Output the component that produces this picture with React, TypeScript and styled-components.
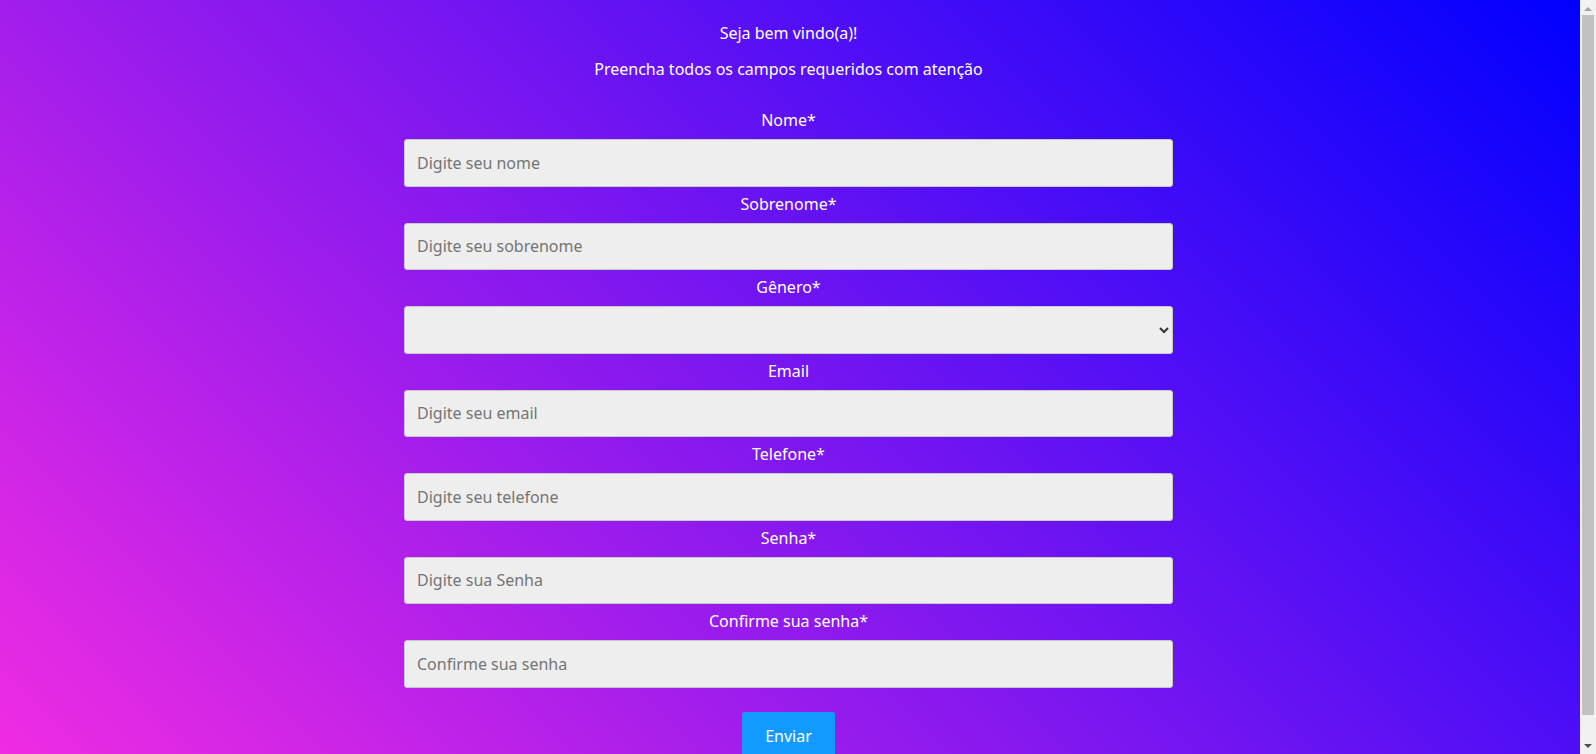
import styled, { createGlobalStyle } from "styled-components";

const GlobalStyle = createGlobalStyle`
  body {
    margin: 0;
    font-family: "Noto Sans", "Open Sans", Arial, sans-serif;
  }
`;

const Page = styled.main`
  min-height: 100vh;
  margin-right: 16px;
  box-sizing: border-box;
  padding: 22px 3px 15px 0;
  display: flex;
  flex-direction: column;
  align-items: center;
  background: linear-gradient(45deg, #f22ce2 0%, #0000ff 100%);
  color: #fff;
`;

const Title = styled.p`
  margin: 0 0 14px;
  font-size: 16px;
  line-height: 22px;
`;

const Form = styled.form`
  width: 769px;
  margin-top: 9px;
  display: flex;
  flex-direction: column;
  align-items: center;
`;

const Field = styled.div`
  width: 100%;
  display: flex;
  flex-direction: column;
  align-items: center;
`;

const Label = styled.label`
  margin: 6px 0 8px;
  font-size: 16px;
  line-height: 22px;
`;

const Input = styled.input`
  width: 100%;
  height: 47.5px;
  box-sizing: border-box;
  padding: 0 12px;
  border: 1px solid #c8c8c8;
  border-radius: 3px;
  background: #eeeeee;
  font-family: inherit;
  font-size: 16px;
  color: #333;
  outline: none;

  &::placeholder {
    color: #757575;
  }
`;

const Select = styled.select`
  width: 100%;
  height: 47.5px;
  box-sizing: border-box;
  padding: 0 8px;
  border: 1px solid #c8c8c8;
  border-radius: 3px;
  background-color: #eeeeee;
  font-family: inherit;
  font-size: 16px;
  color: #333;
  outline: none;
`;

const Button = styled.button`
  margin-top: 24px;
  padding: 0 23px;
  height: 48px;
  border: none;
  border-radius: 3px;
  background: #139afe;
  color: #fff;
  font-family: inherit;
  font-size: 16px;
  cursor: pointer;
`;

/* window scrollbar drawn over the right edge */
const ScrollBar = styled.div`
  position: fixed;
  top: 0;
  right: 0;
  width: 16px;
  height: 100vh;
  background: #f1f1f1;
  display: flex;
  flex-direction: column;
  align-items: center;
`;

const Arrow = styled.div<{ $down?: boolean; $color: string }>`
  height: 17px;
  width: 100%;
  display: flex;
  align-items: center;
  justify-content: center;
  flex-shrink: 0;

  &::before {
    content: "";
    border-left: 4px solid transparent;
    border-right: 4px solid transparent;
    ${(p) => (p.$down ? "border-top" : "border-bottom")}: 4px solid ${(p) => p.$color};
  }
`;

const Thumb = styled.div`
  width: 12px;
  height: 700px;
  margin-top: -2px;
  background: #c1c1c1;
`;

const Spacer = styled.div`
  flex: 1;
`;

const fields = [
  { id: "nome", label: "Nome*", placeholder: "Digite seu nome", type: "text" },
  { id: "sobrenome", label: "Sobrenome*", placeholder: "Digite seu sobrenome", type: "text" },
  { id: "genero", label: "Gênero*", placeholder: "", type: "select" },
  { id: "email", label: "Email", placeholder: "Digite seu email", type: "email" },
  { id: "telefone", label: "Telefone*", placeholder: "Digite seu telefone", type: "tel" },
  { id: "senha", label: "Senha*", placeholder: "Digite sua Senha", type: "password" },
  { id: "confirma", label: "Confirme sua senha*", placeholder: "Confirme sua senha", type: "password" },
];

function App() {
  return (
    <>
      <GlobalStyle />
      <Page>
        <Title>Seja bem vindo(a)!</Title>
        <Title>Preencha todos os campos requeridos com atenção</Title>
        <Form onSubmit={(e) => e.preventDefault()}>
          {fields.map((f) => (
            <Field key={f.id}>
              <Label htmlFor={f.id}>{f.label}</Label>
              {f.type === "select" ? (
                <Select id={f.id} defaultValue="">
                  <option value=""></option>
                  <option value="f">Feminino</option>
                  <option value="m">Masculino</option>
                  <option value="o">Outro</option>
                </Select>
              ) : (
                <Input id={f.id} type={f.type} placeholder={f.placeholder} />
              )}
            </Field>
          ))}
          <Button type="submit">Enviar</Button>
        </Form>
      </Page>
      <ScrollBar>
        <Arrow $color="#a3a3a3" />
        <Thumb />
        <Spacer />
        <Arrow $down $color="#505050" />
      </ScrollBar>
    </>
  );
}

export default App;
